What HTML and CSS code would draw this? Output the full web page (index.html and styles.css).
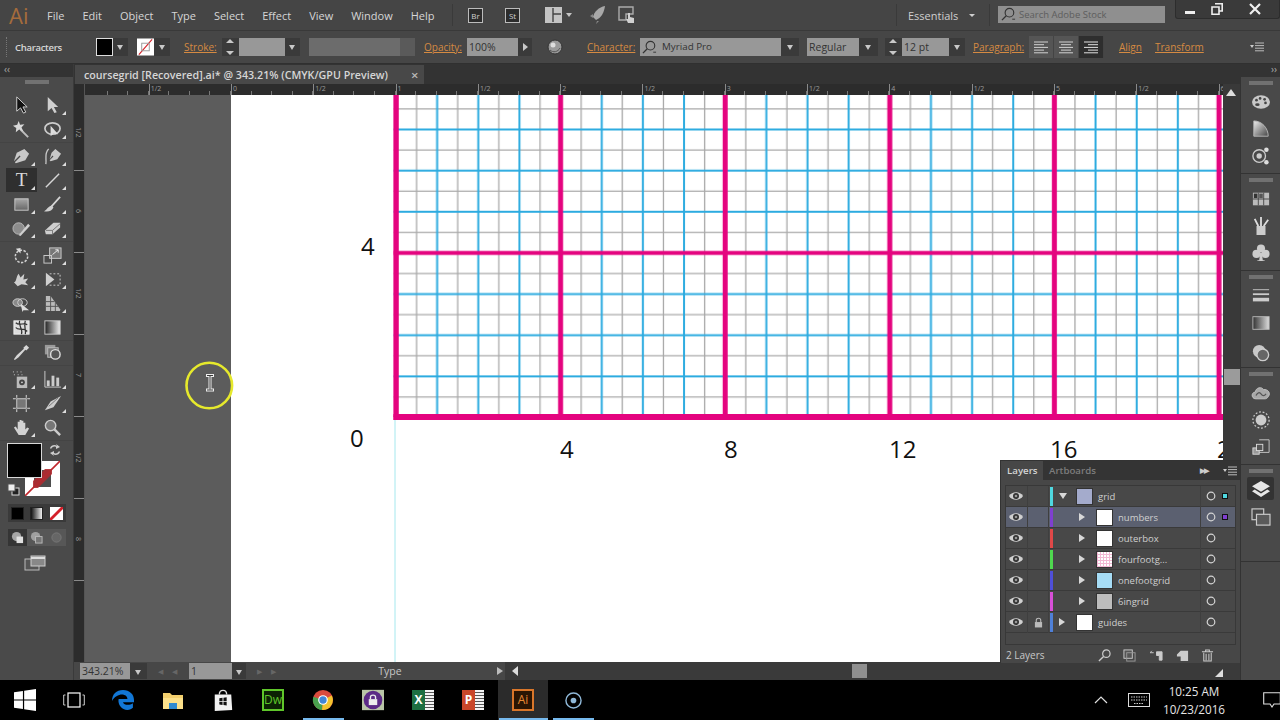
FILE: index.html
```html
<!DOCTYPE html>
<html lang="en">
<head>
    <meta charset="UTF-8">
    <title>coursegrid [Recovered].ai - Adobe Illustrator</title>
    <link rel="stylesheet" href="styles.css">
</head>
<body>
<!-- shared icons -->
<svg class="sprite" width="0" height="0">
    <defs>
        <symbol id="eye" viewBox="0 0 14 10"><path d="M0 5C3 0 11 0 14 5C11 10 3 10 0 5Z" fill="#d0d0d0"/><circle cx="7" cy="5" r="3" fill="#333"/><circle cx="7" cy="5" r="1.3" fill="#999"/></symbol>
        <symbol id="target" viewBox="0 0 10 10"><circle cx="5" cy="5" r="3.8" fill="none" stroke="#d4d4d4" stroke-width="1.2"/></symbol>
        <symbol id="grip" viewBox="0 0 24 4"><path d="M1 0V4M3 0V4M5 0V4M7 0V4M9 0V4M11 0V4M13 0V4M15 0V4M17 0V4M19 0V4M21 0V4M23 0V4" stroke="#9a9a9a" stroke-width="1"/></symbol>
        <symbol id="panelmenu" viewBox="0 0 14 10"><path d="M5 1H14M5 3.6H14M5 6.2H14M5 8.8H14" stroke="#bbb" stroke-width="1"/><path d="M0 3H4L2 6Z" fill="#ccc"/></symbol>
        <linearGradient id="gradgray" x1="0" y1="0" x2="1" y2="1"><stop offset="0" stop-color="#eee"/><stop offset="1" stop-color="#444"/></linearGradient>
        <pattern id="gridcell" patternUnits="userSpaceOnUse" x="385.71" y="242.71" width="164.6" height="164.6">
            <path d="M30.865 0V164.6M72.015 0V164.6M113.165 0V164.6M154.315 0V164.6M0 30.865H164.6M0 72.015H164.6M0 113.165H164.6M0 154.315H164.6" stroke="#a9a9a9" stroke-width="1.3" fill="none"/>
            <path d="M51.44 0V164.6M92.59 0V164.6M133.74 0V164.6M0 51.44H164.6M0 92.59H164.6M0 133.74H164.6" stroke="#2cabe0" stroke-width="2" fill="none"/>
            <path d="M10.29 0V164.6" stroke="#e4047f" stroke-width="5" fill="none"/>
            <path d="M0 10.29H164.6" stroke="#e4047f" stroke-width="4" fill="none"/>
        </pattern>
    </defs>
</svg>

<div class="app">
    <header class="menubar">
        <span class="ai-logo">Ai</span>
        <nav class="menu">
            <span>File</span><span>Edit</span><span>Object</span><span>Type</span><span>Select</span><span>Effect</span><span>View</span><span>Window</span><span>Help</span>
        </nav>
        <span class="vsep"></span>
        <span class="boxbtn boxbtn-br">Br</span>
        <span class="boxbtn boxbtn-st">St</span>
        <svg class="menu-ic menu-layout" viewBox="0 0 28 16"><path d="M0 0H17V16H0Z" fill="#c4c4c4"/><path d="M8 1V15M8 7H16" stroke="#444" stroke-width="1.4"/><path d="M21 6H27L24 10Z" fill="#c4c4c4"/></svg>
        <svg class="menu-ic menu-rocket" viewBox="0 0 16 18"><path d="M15 0C9 1 4 6 3 11L6 14C11 12 14 7 15 0Z" fill="#a8a8a8"/><path d="M3 8L0 10L3 12ZM7 15L6 18L9 15Z" fill="#888"/></svg>
        <svg class="menu-ic menu-hand" viewBox="0 0 18 18"><path d="M1 1H15V8H8V14H1Z" fill="none" stroke="#aaa" stroke-width="1.4"/><path d="M10 7H12V11L16 12V17H10L8 13H10Z" fill="#d0d0d0"/></svg>
        <span class="vsep vsep-essentials"></span>
        <span class="workspace-name">Essentials</span>
        <span class="caret-small"></span>
        <span class="vsep vsep-search"></span>
        <div class="stock-search">
            <svg class="search-ic" viewBox="0 0 16 16"><circle cx="9" cy="6" r="4.6" fill="none" stroke="#333" stroke-width="1.2"/><path d="M5.6 9.4L1 14" stroke="#333" stroke-width="1.4"/><path d="M12 13H15" stroke="#333"/></svg>
            <span>Search Adobe Stock</span>
        </div>
        <div class="winctl">
            <span class="win-min"></span>
            <svg class="win-restore" viewBox="0 0 12 12"><path d="M4 0.8H11.2V8H8.5M1 4H8V11.2H1Z" fill="none" stroke="#eee" stroke-width="1.6"/></svg>
            <svg class="win-close" viewBox="0 0 12 12"><path d="M1 1L11 11M11 1L1 11" stroke="#eee" stroke-width="2.2"/></svg>
        </div>
    </header>

    <section class="optionsbar">
        <span class="opt-grip"></span>
        <span class="opt-name">Characters</span>
        <span class="swatch swatch-fill ml-34"></span><span class="drop w15"></span>
        <svg class="swatch-stroke ml-9" viewBox="0 0 18 18"><rect width="18" height="18" fill="#fff"/><path d="M2 17L16 1" stroke="#d42027" stroke-width="1.2"/><rect x="5" y="5" width="8" height="8" fill="none" stroke="#999"/></svg><span class="drop w16"></span>
        <span class="link ml-14 w30">Stroke:</span>
        <span class="stepper ml-8"></span><span class="field w46"></span><span class="drop w15"></span>
        <span class="field field-dim ml-9 w106"><i class="drop-mini"></i></span>
        <span class="link ml-9 w36">Opacity:</span>
        <span class="field ml-7 w51">100%</span><span class="drop drop-right w14"></span>
        <svg class="globe ml-15" viewBox="0 0 16 16"><circle cx="8" cy="8" r="7" fill="#9a9a9a" stroke="#333"/><circle cx="6" cy="6" r="2.5" fill="#ddd"/><path d="M3 11C6 14 11 13 13 9" stroke="#555" fill="none"/></svg>
        <span class="link ml-24 w45">Character:</span>
        <span class="field field-font ml-8"><svg class="search-ic" viewBox="0 0 16 16"><circle cx="9" cy="6" r="4.6" fill="none" stroke="#333" stroke-width="1.2"/><path d="M5.6 9.4L1 14" stroke="#333" stroke-width="1.4"/><path d="M12 13H15" stroke="#333"/></svg>Myriad Pro</span><span class="drop w18"></span>
        <span class="field ml-8 w52">Regular</span><span class="drop w19"></span>
        <span class="stepper ml-7"></span><span class="field w47">12 pt</span><span class="drop w16"></span>
        <span class="link ml-8 w49">Paragraph:</span>
        <div class="aligns ml-7">
            <span class="align-btn"><svg viewBox="0 0 14 13"><path d="M0 1H14M0 3.7H10M0 6.4H14M0 9.1H10M0 11.8H14" stroke="#d2d2d2"/></svg></span>
            <span class="align-btn"><svg viewBox="0 0 14 13"><path d="M0 1H14M2 3.7H12M0 6.4H14M2 9.1H12M0 11.8H14" stroke="#d2d2d2"/></svg></span>
            <span class="align-btn align-on"><svg viewBox="0 0 14 13"><path d="M0 1H14M4 3.7H14M0 6.4H14M4 9.1H14M0 11.8H14" stroke="#e2e2e2"/></svg></span>
        </div>
        <span class="link ml-15 w22">Align</span>
        <span class="link ml-14 w45">Transform</span>
        <svg class="opt-menu" viewBox="0 0 14 10"><use href="#panelmenu"/></svg>
    </section>

    <div class="workspace">
        <aside class="toolpanel">
            <div class="collapse-tab">&#8249;&#8249;</div>
            <svg class="panel-grip" viewBox="0 0 24 4"><use href="#grip"/></svg>
            <div class="toolgroup">
                <span class="tool"><svg viewBox="0 0 20 20"><path d="M5 1V16L9 12.500L12 18L14.500 17L11.500 11.500H16Z" fill="#111" stroke="#d2d2d2"/></svg></span>
                <span class="tool more"><svg viewBox="0 0 20 20"><path d="M5 1V16L9 12.500L12 18L14.500 17L11.500 11.500H16Z" fill="#cfcfcf"/></svg></span>
                <span class="tool"><svg viewBox="0 0 20 20"><path d="M9 10L17 18" stroke="#bdbdbd" stroke-width="2"/><path d="M7 1L8.500 5L13 4.500L10 8L12 12L7.500 10L4 13L4.500 8.500L1 6L5.500 5Z" fill="#d8d8d8"/></svg></span>
                <span class="tool more"><svg viewBox="0 0 20 20"><ellipse cx="10" cy="9" rx="8" ry="6" fill="none" stroke="#ccc" stroke-width="1.800"/><path d="M8 6V17L11 14.500L16 15Z" fill="#ddd"/></svg></span>
            </div>
            <div class="toolgroup">
                <span class="tool more"><svg viewBox="0 0 20 20"><path d="M13 2L18 7L14 14L4 17L3 16L9 10L8 9L2 15L5 6Z" fill="#c8c8c8"/></svg></span>
                <span class="tool more"><svg viewBox="0 0 20 20"><path d="M13 2L19 7L15 13L8 15L7 14L11 10L10 9L7 13L9 6Z" fill="#c8c8c8"/><path d="M6 2C1 7 4 11 3 18" stroke="#c8c8c8" fill="none" stroke-width="1.400"/></svg></span>
                <span class="tool tool-on more"><span class="tool-t">T</span></span>
                <span class="tool more"><svg viewBox="0 0 20 20"><path d="M3 17L17 3" stroke="#d6d6d6" stroke-width="1.500"/></svg></span>
                <span class="tool more"><svg viewBox="0 0 20 20"><defs><linearGradient id="rectfill" x1="0" y1="0" x2="0" y2="1"><stop offset="0" stop-color="#a8a8a8"/><stop offset="1" stop-color="#666"/></linearGradient></defs><rect x="3" y="4" width="14" height="12" fill="url(#rectfill)" stroke="#c8c8c8"/></svg></span>
                <span class="tool more"><svg viewBox="0 0 20 20"><path d="M18 2L9 12" stroke="#d6d6d6" stroke-width="1.800"/><path d="M9 11L11 13C10 17 5 18 1 17C4 16 5 12 9 11Z" fill="#d0d0d0"/></svg></span>
                <span class="tool more"><svg viewBox="0 0 20 20"><circle cx="7" cy="10" r="6" fill="#8c8c8c" stroke="#bbb"/><path d="M7 17L17 5L19 7L9 18Z" fill="#cfcfcf"/></svg></span>
                <span class="tool more"><svg viewBox="0 0 20 20"><path d="M2 12L11 4H18L18 9L10 16H3Z" fill="#cfcfcf"/><path d="M3 12H10L18 5M10 12V16" stroke="#777" fill="none"/></svg></span>
            </div>
            <div class="toolgroup">
                <span class="tool more"><svg viewBox="0 0 20 20"><circle cx="10" cy="11" r="6.500" fill="none" stroke="#d0d0d0" stroke-width="1.600" stroke-dasharray="2.500 1.500"/><path d="M4 3L9 2V8Z" fill="#ddd"/></svg></span>
                <span class="tool more"><svg viewBox="0 0 20 20"><rect x="7" y="2" width="12" height="11" fill="#777" stroke="#ccc"/><rect x="1" y="10" width="8" height="8" fill="none" stroke="#ccc"/><path d="M10 9L16 4M13 4H16V7" stroke="#eee" fill="none"/></svg></span>
                <span class="tool more"><svg viewBox="0 0 20 20"><path d="M2 13C5 13 4 7 7 4L9 8L13 4L12 10L17 9L14 13L17 16L10 15L6 17Z" fill="#cfcfcf"/></svg></span>
                <span class="tool more"><svg viewBox="0 0 20 20"><path d="M3 3V17L12 10Z" fill="#cfcfcf"/><path d="M7 4H18V16H7" stroke="#ccc" stroke-dasharray="2 2" fill="none"/></svg></span>
                <span class="tool more"><svg viewBox="0 0 20 20"><ellipse cx="6" cy="9" rx="5" ry="4" fill="#8a8a8a" stroke="#ccc"/><ellipse cx="11" cy="9" rx="5" ry="4" fill="none" stroke="#ccc"/><path d="M9 10L18 17L12 17L11 19Z" fill="#ddd"/></svg></span>
                <span class="tool more"><svg viewBox="0 0 20 20"><path d="M3 2H8L18 16V18H3Z" fill="#bbb"/><path d="M8 2V18M13 9V18M3 8H12M3 13H16" stroke="#555"/></svg></span>
                <span class="tool"><svg viewBox="0 0 20 20"><rect x="2" y="3" width="16" height="14" fill="#ddd" stroke="#eee"/><path d="M4 5C8 9 12 4 16 7M4 10C7 14 12 9 16 14M8 3C6 8 12 11 10 17M14 3C12 8 15 12 14 17" stroke="#333" stroke-width="1.300" fill="none"/></svg></span>
                <span class="tool"><svg viewBox="0 0 20 20"><defs><linearGradient id="toolgrad" x1="0" y1="0" x2="1" y2="0"><stop offset="0" stop-color="#222"/><stop offset="1" stop-color="#eee"/></linearGradient></defs><rect x="2" y="3" width="16" height="14" fill="url(#toolgrad)" stroke="#ccc"/></svg></span>
            </div>
            <div class="toolgroup toolgroup-tight">
                <span class="tool"><svg viewBox="0 0 20 20"><path d="M15 2L18 5L15 8L14 7L7 15L3 18L2 17L5 13L12.500 6L12 5Z" fill="#d6d6d6"/></svg></span>
                <span class="tool"><svg viewBox="0 0 20 20"><rect x="2" y="2" width="11" height="10" fill="#999"/><rect x="5" y="5" width="11" height="10" fill="#777" stroke="#bbb"/><circle cx="13" cy="12" r="5" fill="#555" stroke="#ddd" stroke-width="1.500"/></svg></span>
            </div>
            <div class="toolgroup">
                <span class="tool more"><svg viewBox="0 0 20 20"><path d="M1 2H3M5 2H7M9 2H11M2 5H4M6 5H8M10 5H12" stroke="#ccc" stroke-dasharray="1 1"/><rect x="5" y="7" width="11" height="12" fill="#bbb"/><circle cx="10.500" cy="13" r="3" fill="#444"/><circle cx="10.500" cy="13" r="1" fill="#ccc"/></svg></span>
                <span class="tool more"><svg viewBox="0 0 20 20"><path d="M2 1V18H19" stroke="#ccc" fill="none"/><rect x="4" y="11" width="3" height="6" fill="#ccc"/><rect x="9" y="6" width="3" height="11" fill="#ccc"/><rect x="14" y="8" width="3" height="9" fill="#ccc"/></svg></span>
                <span class="tool"><svg viewBox="0 0 20 20"><rect x="5" y="5" width="10" height="10" fill="#777" stroke="#ccc"/><path d="M5 1V4M15 1V4M5 16V19M15 16V19M1 5H4M1 15H4M16 5H19M16 15H19" stroke="#ddd"/></svg></span>
                <span class="tool more"><svg viewBox="0 0 20 20"><path d="M19 2L8 8L2 17L11 14Z" fill="#cdcdcd"/><path d="M16 4L6 13" stroke="#777"/></svg></span>
                <span class="tool more"><svg viewBox="0 0 20 20"><path d="M2 10L4 9L6 12V4H8V9V2H10V9V3H12V9V5H14V12L16 10L18 11L14 18H7Z" fill="#d2d2d2"/></svg></span>
                <span class="tool"><svg viewBox="0 0 20 20"><circle cx="8" cy="8" r="5.500" fill="#777" stroke="#ccc" stroke-width="1.500"/><path d="M12 12L18 18" stroke="#ccc" stroke-width="2.500"/></svg></span>
            </div>

            <div class="colorbox">
                <svg class="stroke-box" viewBox="0 0 35 35"><rect width="35" height="35" fill="#fff"/><rect x="9" y="9" width="17" height="17" fill="#4d4d4d"/><path d="M0 35L35 0" stroke="#c1272d" stroke-width="1.600"/><path d="M8 20L20 8L27 8L27 13L13 27L8 27Z" fill="#b02a30" opacity=".9"/></svg>
                <span class="fill-box"></span>
                <svg class="swap-ic" viewBox="0 0 14 14"><path d="M2 5C3 2 7 1 9 3L8 1L12 4L8 6V4C6 3 4 4 3 6ZM12 9C11 12 7 13 5 11L6 13L2 10L6 8V10C8 11 10 10 11 8Z" fill="#ccc"/></svg>
                <svg class="default-ic" viewBox="0 0 13 13"><rect x="5" y="5" width="7" height="7" fill="#222" stroke="#ddd"/><rect x="1" y="1" width="7" height="7" fill="#eee" stroke="#555"/></svg>
            </div>
            <div class="modes modes-color">
                <span class="mode"><i class="mode-black"></i></span>
                <span class="mode"><i class="mode-grad"></i></span>
                <span class="mode"><svg viewBox="0 0 12 12"><rect width="12" height="12" fill="#fff"/><path d="M0 12L12 0" stroke="#d4202a" stroke-width="2.600"/></svg></span>
            </div>
            <div class="modes modes-draw">
                <span class="mode mode-on"><svg viewBox="0 0 14 14"><circle cx="6" cy="6" r="5" fill="#a5a5a5"/><rect x="6" y="6" width="7" height="7" fill="#e0e0e0"/></svg></span>
                <span class="mode"><svg viewBox="0 0 14 14"><circle cx="6" cy="6" r="5" fill="#a0a0a0"/><rect x="6" y="6" width="7" height="7" fill="#777" stroke="#bbb"/></svg></span>
                <span class="mode"><svg viewBox="0 0 14 14"><circle cx="7" cy="7" r="5" fill="#666" stroke="#777"/></svg></span>
            </div>
            <svg class="screen-mode" viewBox="0 0 22 16"><rect x="1" y="4" width="14" height="11" fill="#555" stroke="#bbb"/><rect x="7" y="1" width="14" height="10" fill="#888" stroke="#ccc"/><path d="M7 3H21" stroke="#ddd" stroke-width="2"/></svg>
        </aside>

        <main class="docarea">
            <div class="tabstrip">
                <div class="doctab">
                    <span class="doctab-title">coursegrid [Recovered].ai* @ 343.21% (CMYK/GPU Preview)</span>
                    <span class="doctab-close">&#215;</span>
                </div>
            </div>
            <div class="ruler-row">
                <span class="ruler-corner"></span>
                <div class="ruler-top">
                    <span>1/2</span><span>0</span><span>1/2</span><span>1</span><span>1/2</span><span>2</span><span>1/2</span><span>3</span><span>1/2</span><span>4</span><span>1/2</span><span>5</span><span>1/2</span><span>6</span>
                </div>
                <span class="scroll-cap"><i class="arrow-up"></i></span>
            </div>
            <div class="canvas-row">
                <div class="ruler-left">
                    <span>1/2</span><span>6</span><span>1/2</span><span>7</span><span>1/2</span><span>8</span>
                </div>
                <div class="canvas">
                    <svg class="art" viewBox="85 95 1138 567">
                        <rect x="231" y="95" width="992" height="567" fill="#fff"/>
                        <rect x="393.500" y="95" width="829.500" height="322" fill="url(#gridcell)"/>
                        <path d="M396 95V420" stroke="#e4047f" stroke-width="5"/>
                        <path d="M393.500 417H1223" stroke="#e4047f" stroke-width="6"/>
                        <path d="M395 420V662" stroke="#a5e8ee" stroke-width="1"/>
                        <circle cx="209.300" cy="385.500" r="22.800" fill="none" stroke="#e6e92c" stroke-width="2.600"/>
                        <path d="M206 375.500H214M210 375.500V390M206 390H214" fill="none" stroke="#eee" stroke-width="3"/>
                        <path d="M207 375.500H213M210 376V389.500M207 390H213" fill="none" stroke="#3a3a3a" stroke-width="1"/>
                    </svg>
                    <span class="num num-y4">4</span>
                    <span class="num num-y0">0</span>
                    <span class="num num-x4">4</span>
                    <span class="num num-x8">8</span>
                    <span class="num num-x12">12</span>
                    <span class="num num-x16">16</span>
                    <span class="num num-x20">2</span>
                </div>
                <div class="vscroll"><span class="vthumb"></span></div>
            </div>
            <footer class="statusrow">
                <div class="status-left">
                    <span class="field status-zoom">343.21%</span><span class="drop status-drop"></span>
                    <span class="nav nav-first">&#9664;</span><span class="nav">&#9664;</span>
                    <span class="field status-page">1</span><span class="drop status-drop-page"></span>
                    <span class="nav nav-next">&#9654;</span><span class="nav">&#9654;</span>
                    <span class="status-tool">Type</span>
                    <i class="arrow-right"></i>
                </div>
                <div class="hscroll">
                    <i class="arrow-left"></i>
                    <span class="hthumb"></span>
                    <i class="corner-mark"></i>
                </div>
            </footer>

            <section class="layers">
                <div class="layers-tabs">
                    <span class="ltab ltab-on">Layers</span>
                    <span class="ltab">Artboards</span>
                    <span class="ltab-more">&#9654;&#9654;</span>
                    <svg class="ltab-menu" viewBox="0 0 14 10"><use href="#panelmenu"/></svg>
                </div>
                <div class="layer-list">
                    <div class="layer">
                        <svg class="l-eye"><use href="#eye"/></svg><span class="l-lock"></span><span class="l-bar bar-cyan"></span>
                        <div class="l-main"><i class="tri-down"></i><span class="thumb thumb-grid"></span><span class="l-name">grid</span></div>
                        <div class="l-target"><svg><use href="#target"/></svg><i class="sel sel-cyan"></i></div>
                    </div>
                    <div class="layer layer-on">
                        <svg class="l-eye"><use href="#eye"/></svg><span class="l-lock"></span><span class="l-bar bar-purple"></span>
                        <div class="l-main l-child"><i class="tri-right"></i><span class="thumb"></span><span class="l-name">numbers</span></div>
                        <div class="l-target"><svg><use href="#target"/></svg><i class="sel sel-purple"></i></div>
                    </div>
                    <div class="layer">
                        <svg class="l-eye"><use href="#eye"/></svg><span class="l-lock"></span><span class="l-bar bar-red"></span>
                        <div class="l-main l-child"><i class="tri-right"></i><span class="thumb"></span><span class="l-name">outerbox</span></div>
                        <div class="l-target"><svg><use href="#target"/></svg></div>
                    </div>
                    <div class="layer">
                        <svg class="l-eye"><use href="#eye"/></svg><span class="l-lock"></span><span class="l-bar bar-green"></span>
                        <div class="l-main l-child"><i class="tri-right"></i><span class="thumb thumb-four"></span><span class="l-name">fourfootg...</span></div>
                        <div class="l-target"><svg><use href="#target"/></svg></div>
                    </div>
                    <div class="layer">
                        <svg class="l-eye"><use href="#eye"/></svg><span class="l-lock"></span><span class="l-bar bar-blue"></span>
                        <div class="l-main l-child"><i class="tri-right"></i><span class="thumb thumb-one"></span><span class="l-name">onefootgrid</span></div>
                        <div class="l-target"><svg><use href="#target"/></svg></div>
                    </div>
                    <div class="layer">
                        <svg class="l-eye"><use href="#eye"/></svg><span class="l-lock"></span><span class="l-bar bar-pink"></span>
                        <div class="l-main l-child"><i class="tri-right"></i><span class="thumb thumb-six"></span><span class="l-name">6ingrid</span></div>
                        <div class="l-target"><svg><use href="#target"/></svg></div>
                    </div>
                    <div class="layer">
                        <svg class="l-eye"><use href="#eye"/></svg>
                        <span class="l-lock"><svg viewBox="0 0 10 12"><path d="M2.500 6V3.500C2.500 0.500 7.500 0.500 7.500 3.500V6" fill="none" stroke="#bbb" stroke-width="1.200"/><rect x="1" y="5.500" width="8" height="6" fill="#bbb"/></svg></span>
                        <span class="l-bar bar-royal"></span>
                        <div class="l-main"><i class="tri-right"></i><span class="thumb"></span><span class="l-name">guides</span></div>
                        <div class="l-target"><svg><use href="#target"/></svg></div>
                    </div>
                </div>
                <div class="layers-foot">
                    <span class="foot-count">2 Layers</span>
                    <svg class="foot-ic foot-find" viewBox="0 0 14 14"><circle cx="9" cy="5" r="4" fill="none" stroke="#ccc" stroke-width="1.300"/><path d="M6 8L1 13" stroke="#ccc" stroke-width="1.500"/></svg>
                    <svg class="foot-ic foot-clip" viewBox="0 0 14 14"><rect x="1" y="1" width="9" height="9" fill="#555" stroke="#ccc"/><rect x="4" y="4" width="9" height="9" fill="none" stroke="#999"/></svg>
                    <svg class="foot-ic foot-sub" viewBox="0 0 14 14"><path d="M0 4H4M0 4L2 2M7 3H13V12H10V7H7Z" stroke="#ccc" fill="#ccc"/></svg>
                    <svg class="foot-ic foot-new" viewBox="0 0 14 14"><path d="M5 2H13V13H5V8H1V6Z" fill="#ccc"/></svg>
                    <svg class="foot-ic foot-trash" viewBox="0 0 14 14"><path d="M1 3H13M5 3V1H9V3M3 4V13H11V4M5.500 5V12M8.500 5V12" stroke="#ccc" fill="none" stroke-width="1.100"/></svg>
                </div>
            </section>
        </main>

        <aside class="dock">
            <div class="collapse-tab collapse-right">&#8250;&#8250;</div>
            <div class="dockgroup">
                <svg class="dock-grip" viewBox="0 0 24 4"><use href="#grip"/></svg>
                <svg class="dock-ic" viewBox="0 0 22 20"><ellipse cx="11" cy="10" rx="10" ry="7.500" fill="#c8c8c8"/><circle cx="6" cy="8" r="1.500" fill="#444"/><circle cx="10" cy="6" r="1.500" fill="#444"/><circle cx="15" cy="7" r="1.500" fill="#444"/><circle cx="16" cy="11" r="1.500" fill="#444"/><ellipse cx="7" cy="13" rx="2.500" ry="1.500" fill="#444"/></svg>
                <svg class="dock-ic" viewBox="0 0 22 20"><path d="M3 1C12 1 19 9 19 18H3Z" fill="url(#gradgray)" stroke="#bbb"/></svg>
                <svg class="dock-ic" viewBox="0 0 22 20"><circle cx="9" cy="10" r="7" fill="none" stroke="#ccc" stroke-width="1.500"/><circle cx="9" cy="10" r="3" fill="#ccc"/><circle cx="17" cy="3" r="2.500" fill="#ddd"/><circle cx="17" cy="17" r="2.500" fill="#ddd"/></svg>
            </div>
            <div class="dockgroup">
                <svg class="dock-grip" viewBox="0 0 24 4"><use href="#grip"/></svg>
                <svg class="dock-ic" viewBox="0 0 22 20"><rect x="2" y="3" width="18" height="14" fill="#bbb"/><path d="M2 10H20M8 3V17M14 3V17" stroke="#444"/><rect x="3" y="4" width="4" height="5" fill="#333"/><rect x="9" y="4" width="4" height="5" fill="#555"/></svg>
                <svg class="dock-ic" viewBox="0 0 22 20"><path d="M6 10H16V20H6Z" fill="#ccc"/><path d="M8 10L4 2M11 10V0M14 10L19 3" stroke="#ddd" stroke-width="2"/></svg>
                <svg class="dock-ic" viewBox="0 0 22 20"><circle cx="11" cy="5" r="4.500" fill="#ccc"/><circle cx="6" cy="11" r="4.500" fill="#ccc"/><circle cx="16" cy="11" r="4.500" fill="#ccc"/><path d="M10 10H12L13 18H15V19H7V18H9Z" fill="#ccc"/></svg>
            </div>
            <div class="dockgroup">
                <svg class="dock-grip" viewBox="0 0 24 4"><use href="#grip"/></svg>
                <svg class="dock-ic" viewBox="0 0 22 20"><path d="M2 3H20" stroke="#ccc"/><path d="M2 8H20" stroke="#ccc" stroke-width="2"/><path d="M2 14H20" stroke="#ccc" stroke-width="4"/></svg>
                <svg class="dock-ic" viewBox="0 0 22 20"><defs><linearGradient id="dockgrad" x1="0" y1="0" x2="1" y2="0"><stop offset="0" stop-color="#333"/><stop offset="1" stop-color="#ddd"/></linearGradient></defs><rect x="2" y="3" width="18" height="14" fill="url(#dockgrad)" stroke="#bbb"/></svg>
                <svg class="dock-ic dock-ic-low" viewBox="0 0 22 20"><circle cx="9" cy="8" r="7" fill="#c8c8c8"/><circle cx="13" cy="12" r="6.500" fill="#666" stroke="#ccc" stroke-width="1.500"/></svg>
            </div>
            <div class="dockgroup">
                <svg class="dock-grip" viewBox="0 0 24 4"><use href="#grip"/></svg>
                <svg class="dock-ic" viewBox="0 0 24 20"><path d="M6 17C0 17 0 9 5 9C6 3 13 2 15 6C20 5 24 10 21 14C20 16 18 17 17 17Z" fill="#a8a8a8" stroke="#ccc"/><path d="M6 13C8 9 10 9 12 11C14 14 16 14 18 11" stroke="#555" stroke-width="1.500" fill="none"/></svg>
                <svg class="dock-ic" viewBox="0 0 22 20"><circle cx="11" cy="10" r="6" fill="#ccc"/><circle cx="11" cy="10" r="9" fill="none" stroke="#ccc" stroke-width="1.400" stroke-dasharray="2 2"/></svg>
                <svg class="dock-ic" viewBox="0 0 22 20"><path d="M9 2H20V16H9" fill="none" stroke="#ccc"/><rect x="2" y="11" width="7" height="7" fill="#999" stroke="#ddd"/><rect x="6" y="7" width="7" height="7" fill="#555" stroke="#ddd"/></svg>
            </div>
            <div class="dockgroup">
                <svg class="dock-grip" viewBox="0 0 24 4"><use href="#grip"/></svg>
                <span class="dock-on"><svg class="dock-ic" viewBox="0 0 22 20"><path d="M11 1L21 7L11 13L1 7Z" fill="#e6e6e6"/><path d="M4 10.500L11 15L18 10.500L21 12.500L11 19L1 12.500Z" fill="#e6e6e6"/></svg></span>
                <svg class="dock-ic" viewBox="0 0 22 20"><rect x="1" y="1" width="13" height="12" fill="none" stroke="#ccc" stroke-width="1.300"/><rect x="6" y="7" width="15" height="12" fill="#5a5a5a" stroke="#ccc" stroke-width="1.300"/></svg>
            </div>
        </aside>
    </div>

    <footer class="taskbar">
        <span class="task task-narrow"><svg viewBox="0 0 18 18"><path d="M0 2.600L7.300 1.600V8.500H0ZM8.300 1.400L18 0V8.500H8.300ZM0 9.500H7.300V16.400L0 15.400ZM8.300 9.500H18V18L8.300 16.600Z" fill="#fff"/></svg></span>
        <span class="task task-narrow"><svg viewBox="0 0 22 16"><rect x="5" y="1" width="12" height="14" fill="none" stroke="#fff" stroke-width="1.200"/><path d="M2.500 3H0.700V13H2.500M19.500 3H21.300V13H19.500" fill="none" stroke="#ccc"/></svg></span>
        <span class="task"><svg viewBox="0 0 20 20"><path d="M10 1C4 1 0 5 0 11C2 7 6 5 9 5C12 5 14 7 14 9H6C5 14 9 19 14 19C16 19 18 18 19 17V13C16 15 11 15 10 12H20V10C20 5 16 1 10 1Z" fill="#1277d6"/></svg></span>
        <span class="task"><svg viewBox="0 0 22 20"><path d="M1 3H8L10 5H21V8H1Z" fill="#f3cf6d"/><path d="M1 8H21V19H1Z" fill="#fbe08a"/><rect x="7" y="13" width="8" height="6" fill="#2f8ad0"/></svg></span>
        <span class="task"><svg viewBox="0 0 20 24"><path d="M1 6H19L20 23L1 24Z" fill="#f2f2f2"/><path d="M6 6C6 0 14 0 14 6" fill="none" stroke="#ddd" stroke-width="1.500"/><path d="M6 10L9.500 9.500V13H6ZM10.500 9.500L14 9V13H10.500ZM6 14H9.500V17.500L6 17ZM10.500 14H14V18L10.500 17.500Z" fill="#111"/></svg></span>
        <span class="task"><span class="app-box app-dw">Dw</span></span>
        <span class="task task-run"><svg viewBox="0 0 24 24"><circle cx="12" cy="12" r="11" fill="#d94b3d"/><path d="M12 12L1.500 8.500A11 11 0 0 0 11 23Z" fill="#49a04d"/><path d="M12 12L11 23A11 11 0 0 0 21.500 7Z" fill="#f3c32e"/><circle cx="12" cy="12" r="5.300" fill="#fff"/><circle cx="12" cy="12" r="4" fill="#4285d6"/></svg></span>
        <span class="task"><svg viewBox="0 0 26 24"><rect width="26" height="24" fill="#d9e8c4" opacity=".85"/><circle cx="13" cy="12" r="11" fill="#5b2a86"/><rect x="8" y="11" width="10" height="7" fill="#eee"/><path d="M10 11V8.500C10 5.500 16 5.500 16 8.500V11" fill="none" stroke="#eee" stroke-width="1.600"/></svg></span>
        <span class="task"><span class="app-office app-xl"><b>X</b><i></i></span></span>
        <span class="task"><span class="app-office app-ppt"><b>P</b><i></i></span></span>
        <span class="task task-active"><span class="app-box app-ai">Ai</span></span>
        <span class="task task-run task-small"><svg viewBox="0 0 18 18"><circle cx="9" cy="9" r="8" fill="none" stroke="#8fb8d8" stroke-width="1.500"/><circle cx="9" cy="9" r="3" fill="#8fb8d8"/></svg></span>
        <div class="tray">
            <svg class="tray-chevron" viewBox="0 0 14 8"><path d="M1 7L7 1L13 7" fill="none" stroke="#e0e0e0" stroke-width="1.200"/></svg>
            <svg class="tray-keys" viewBox="0 0 22 14"><rect x="0.500" y="0.500" width="21" height="13" fill="none" stroke="#ddd"/><path d="M3 4H19M3 7H19M6 10.500H16" stroke="#ccc" stroke-dasharray="1.500 1"/></svg>
            <div class="clock"><span>10:25 AM</span><span>10/23/2016</span></div>
            <svg class="tray-note" viewBox="0 0 18 16"><path d="M0.700 0.700H17.300V12H11L9 15L7 12H0.700Z" fill="none" stroke="#e0e0e0" stroke-width="1.100"/></svg>
        </div>
    </footer>
</div>
</body>
</html>
```

FILE: styles.css
```css
* {
    box-sizing: border-box;
}

body {
    margin: 0;
    background: #000;
    font-family: "Open Sans", "Liberation Sans", sans-serif;
    overflow: hidden;
}

.sprite {
    position: absolute;
}

.app {
    width: 1280px;
    height: 720px;
    display: flex;
    flex-direction: column;
}

/* menu bar */
.menubar {
    height: 31px;
    flex: none;
    display: flex;
    align-items: center;
    background: #454545;
    border-bottom: 1px solid #393939;
    position: relative;
}

.ai-logo {
    width: 47px;
    padding-left: 9px;
    font-size: 22px;
    line-height: 30px;
    color: #a56c3c;
}

.menu {
    display: flex;
    gap: 18px;
    font-size: 11px;
    color: #d6d6d6;
    width: 392px;
}

.vsep {
    width: 1px;
    height: 22px;
    background: #3a3a3a;
    margin-left: 13px;
}

.boxbtn {
    width: 15px;
    height: 15px;
    border: 1px solid #bcbcbc;
    background: #2c2c2c;
    color: #d0d0d0;
    font-size: 8px;
    line-height: 13px;
    text-align: center;
}

.boxbtn-br {
    margin-left: 15px;
}

.boxbtn-st {
    margin-left: 22px;
}

.menu-ic {
    height: 16px;
}

.menu-layout {
    width: 28px;
    margin-left: 25px;
}

.menu-rocket {
    width: 16px;
    height: 18px;
    margin-left: 17px;
}

.menu-hand {
    width: 18px;
    height: 18px;
    margin-left: 12px;
}

.vsep-essentials {
    margin-left: 260px;
}

.workspace-name {
    margin-left: 11px;
    width: 58px;
    font-size: 11px;
    color: #cfcfcf;
}

.caret-small {
    width: 0;
    height: 0;
    margin-left: 3px;
    border: 3px solid transparent;
    border-top: 3px solid #cfcfcf;
    border-bottom: 0;
}

.vsep-search {
    margin-left: 14px;
}

.stock-search {
    width: 167px;
    height: 17px;
    margin-left: 8px;
    margin-bottom: 2px;
    background: #8f8f8f;
    display: flex;
    align-items: center;
    gap: 3px;
    padding-left: 3px;
    font-size: 9.5px;
    color: #5d5d5d;
}

.search-ic {
    width: 15px;
    height: 15px;
    flex: none;
}

.winctl {
    position: absolute;
    top: 0;
    right: 0;
    width: 105px;
    height: 19px;
    background: #3a3a3a;
    border: 1px solid #2d2d2d;
    border-top: 0;
    border-radius: 0 0 3px 3px;
}

.win-min {
    position: absolute;
    left: 9px;
    top: 11px;
    width: 10px;
    height: 3px;
    background: #eee;
}

.win-restore {
    position: absolute;
    left: 35px;
    top: 3px;
    width: 12px;
    height: 12px;
}

.win-close {
    position: absolute;
    left: 73px;
    top: 3px;
    width: 12px;
    height: 12px;
}

/* control panel */
.optionsbar {
    height: 33px;
    flex: none;
    display: flex;
    align-items: center;
    position: relative;
    background: #464646;
    border-bottom: 1px solid #303030;
    font-size: 10.5px;
    color: #333;
}

.opt-grip {
    width: 3px;
    height: 20px;
    margin-left: 6px;
    border-left: 1px dotted #777;
}

.opt-name {
    width: 47px;
    margin-left: 6px;
    white-space: nowrap;
    color: #d6d6d6;
    font-weight: 600;
    font-size: 9.5px;
    letter-spacing: -0.3px;
}

.swatch {
    width: 17px;
    height: 18px;
    border: 1px solid #ddd;
    background: #000;
}

.swatch-stroke {
    width: 17px;
    height: 18px;
}

.drop {
    height: 18px;
    flex: none;
    background: #3a3a3a;
    position: relative;
}

.drop::after {
    content: "";
    position: absolute;
    left: 50%;
    top: 7px;
    margin-left: -3.5px;
    border: 3.5px solid transparent;
    border-top: 5px solid #c8c8c8;
    border-bottom: 0;
}

.drop-right::after {
    top: 5px;
    margin-left: -2px;
    border: 4px solid transparent;
    border-left: 5px solid #c8c8c8;
    border-right: 0;
}

.field {
    height: 18px;
    flex: none;
    background: #989898;
    line-height: 18px;
    padding-left: 2px;
    color: #333;
    white-space: nowrap;
    position: relative;
}

.field-dim {
    background: #6c6c6c;
}

.drop-mini {
    position: absolute;
    right: 0;
    top: 0;
    width: 15px;
    height: 18px;
    background: #5a5a5a;
}

.field-font {
    width: 141px;
    display: flex;
    align-items: center;
    gap: 5px;
    font-size: 9.8px;
}

.stepper {
    width: 17px;
    height: 18px;
    flex: none;
    background: #3a3a3a;
    position: relative;
}

.stepper::before,
.stepper::after {
    content: "";
    position: absolute;
    left: 4px;
    border: 4px solid transparent;
}

.stepper::before {
    top: 1px;
    border-bottom: 4px solid #c8c8c8;
    border-top: 0;
}

.stepper::after {
    bottom: 1px;
    border-top: 4px solid #c8c8c8;
    border-bottom: 0;
}

.link {
    color: #d58a42;
    text-decoration: underline;
    font-size: 10px;
    white-space: nowrap;
    flex: none;
}

.aligns {
    display: flex;
    height: 22px;
    background: #555;
}

.align-btn {
    width: 25px;
    display: flex;
    align-items: center;
    justify-content: center;
    border-right: 1px solid #444;
}

.align-btn svg {
    width: 14px;
    height: 13px;
}

.align-on {
    background: #2e2e2e;
}

.globe {
    width: 16px;
    height: 16px;
    flex: none;
}

.opt-menu {
    width: 14px;
    height: 10px;
    margin-left: 50px;
}

.ml-7 { margin-left: 7px; }
.ml-8 { margin-left: 8px; }
.ml-9 { margin-left: 9px; }
.ml-14 { margin-left: 14px; }
.ml-15 { margin-left: 15px; }
.ml-24 { margin-left: 24px; }
.ml-34 { margin-left: 34px; }
.w14 { width: 14px; }
.w15 { width: 15px; }
.w16 { width: 16px; }
.w18 { width: 18px; }
.w19 { width: 19px; }
.w22 { width: 22px; }
.w30 { width: 30px; }
.w36 { width: 36px; }
.w45 { width: 45px; }
.w46 { width: 46px; }
.w47 { width: 47px; }
.w49 { width: 49px; }
.w51 { width: 51px; }
.w52 { width: 52px; }
.w106 { width: 106px; }

/* main area */
.workspace {
    flex: 1;
    display: flex;
    min-height: 0;
    background: #333;
}

/* tools */
.toolpanel {
    width: 74px;
    flex: none;
    background: #4a4a4a;
    border-right: 1px solid #3a3a3a;
    background-clip: padding-box;
    position: relative;
}

.collapse-tab {
    height: 13px;
    background: #333;
    color: #aaa;
    font-size: 10px;
    line-height: 11px;
    padding-left: 4px;
}

.collapse-right {
    text-align: right;
    padding-right: 3px;
}

.panel-grip {
    display: block;
    width: 24px;
    height: 4px;
    margin: 3px auto 9px;
}

.toolgroup {
    display: grid;
    grid-template-columns: 31px 31px;
    grid-auto-rows: 24px;
    padding: 0 6px 1px;
    margin-bottom: 1px;
    border-bottom: 1px solid #444;
}

.toolgroup-tight {
    margin-top: -2px;
}

.tool {
    display: flex;
    align-items: center;
    justify-content: center;
    position: relative;
}

.tool svg {
    width: 19px;
    height: 19px;
}

.tool.more::after {
    content: "";
    position: absolute;
    right: 2px;
    bottom: 2px;
    border: 2px solid transparent;
    border-right-color: #ddd;
    border-bottom-color: #ddd;
}

.tool-on {
    background: #2f2f2f;
}

.tool-t {
    font-family: "Liberation Serif", serif;
    font-size: 19px;
    line-height: 20px;
    color: #d8d8d8;
}

.colorbox {
    height: 56px;
    margin-top: 2px;
    position: relative;
}

.fill-box {
    position: absolute;
    left: 7px;
    top: 0;
    width: 35px;
    height: 35px;
    background: #000;
    border: 1px solid #d8d8d8;
}

.stroke-box {
    position: absolute;
    left: 25px;
    top: 18px;
    width: 35px;
    height: 35px;
}

.swap-ic {
    position: absolute;
    left: 48px;
    top: 0;
    width: 14px;
    height: 14px;
}

.default-ic {
    position: absolute;
    left: 7px;
    top: 40px;
    width: 13px;
    height: 13px;
}

.modes {
    width: 58px;
    margin-left: 8px;
    display: flex;
    background: #3a3a3a;
}

.modes-color {
    height: 18px;
    margin-top: 5px;
    padding: 2px 0;
}

.modes-draw {
    height: 17px;
    margin-top: 7px;
    background: #575757;
}

.mode {
    flex: 1;
    display: flex;
    align-items: center;
    justify-content: center;
}

.mode svg {
    width: 13px;
    height: 13px;
}

.mode-on {
    background: #353535;
}

.mode-black,
.mode-grad {
    width: 13px;
    height: 13px;
    border: 1px solid #222;
}

.mode-black {
    background: #000;
}

.mode-grad {
    background: linear-gradient(90deg, #111, #eee);
}

.screen-mode {
    display: block;
    width: 22px;
    height: 16px;
    margin: 9px 0 0 24px;
}

/* document area */
.docarea {
    flex: 1;
    min-width: 0;
    display: flex;
    flex-direction: column;
    position: relative;
}

.tabstrip {
    height: 20px;
    flex: none;
    background: #333;
    padding: 1px 0 0 1px;
}

.doctab {
    width: 349px;
    height: 19px;
    background: #484848;
    display: flex;
    align-items: center;
    padding-left: 9px;
    font-size: 10.7px;
    font-weight: 600;
    color: #d6d6d6;
}

.doctab-title {
    width: 327px;
    white-space: nowrap;
}

.doctab-close {
    color: #bbb;
    font-size: 13px;
}

.ruler-row {
    height: 11px;
    flex: none;
    display: flex;
}

.ruler-corner {
    width: 11px;
    background: #2c2c2c;
    border-right: 1px solid #555;
}

.ruler-top {
    flex: 1;
    display: flex;
    padding-left: 63.7px;
    overflow: hidden;
    background: repeating-linear-gradient(90deg, #2c2c2c 0, #2c2c2c 19.575px, #777 19.575px, #777 20.575px) 2px 7px / auto 4px no-repeat #2c2c2c;
}

.ruler-top span {
    width: 82.3px;
    flex: none;
    border-left: 1px solid #8a8a8a;
    padding-left: 1px;
    font-size: 7px;
    line-height: 9px;
    color: #9b9b9b;
}

.scroll-cap {
    width: 17px;
    background: #393939;
    position: relative;
}

.arrow-up {
    position: absolute;
    left: 3px;
    top: 5px;
    border: 5px solid transparent;
    border-bottom: 7px solid #ddd;
    border-top: 0;
}

.canvas-row {
    flex: 1;
    display: flex;
    min-height: 0;
}

.ruler-left {
    width: 11px;
    flex: none;
    background: #2c2c2c;
    border-right: 1px solid #555;
    display: flex;
    flex-direction: column;
    overflow: hidden;
}

.ruler-left span {
    height: 82px;
    flex: none;
    border-bottom: 1px solid #8a8a8a;
    display: flex;
    flex-direction: column;
    justify-content: flex-end;
    align-items: center;
    font-size: 7px;
    line-height: 8px;
    color: #9b9b9b;
    writing-mode: vertical-rl;
}

.ruler-left span:first-child {
    height: 76px;
}

.canvas {
    flex: 1;
    background: #5c5c5c;
    position: relative;
    overflow: hidden;
}

.art {
    position: absolute;
    left: 0;
    top: 0;
    width: 1138px;
    height: 567px;
}

.num {
    position: absolute;
    font-size: 24px;
    line-height: 30px;
    color: #111;
}

.num-y4 { left: 276px; top: 136px; }
.num-y0 { left: 265px; top: 328px; }
.num-x4 { left: 475px; top: 339px; }
.num-x8 { left: 639px; top: 339px; }
.num-x12 { left: 804px; top: 339px; }
.num-x16 { left: 965px; top: 339px; }
.num-x20 { left: 1132px; top: 339px; }

.vscroll {
    width: 17px;
    flex: none;
    background: #393939;
    padding-top: 274px;
    padding-left: 1px;
}

.vthumb {
    display: block;
    height: 16px;
    background: #9b9b9b;
}

.statusrow {
    height: 18px;
    flex: none;
    display: flex;
    font-size: 10.5px;
    color: #ccc;
}

.status-left {
    width: 431px;
    flex: none;
    display: flex;
    align-items: center;
    background: #474747;
    padding-left: 6px;
}

.status-zoom {
    width: 50px;
    height: 16px;
    line-height: 16px;
}

.status-drop {
    width: 17px;
    height: 16px;
}

.status-page {
    width: 43px;
    height: 16px;
    line-height: 16px;
    margin-left: 8px;
}

.status-drop-page {
    width: 14px;
    height: 16px;
}

.nav {
    width: 14px;
    font-size: 7px;
    color: #666;
    text-align: center;
}

.nav-first {
    margin-left: 6px;
}

.nav-next {
    margin-left: 6px;
}

.status-tool {
    width: 200px;
    text-align: center;
    padding-left: 20px;
    color: #c6c6c6;
}

.arrow-right {
    margin-left: 17px;
    border: 4px solid transparent;
    border-left: 6px solid #bbb;
    border-right: 0;
}

.hscroll {
    flex: 1;
    background: #3a3a3a;
    display: flex;
    align-items: center;
    position: relative;
}

.arrow-left {
    margin-left: 7px;
    border: 5px solid transparent;
    border-right: 6px solid #ddd;
    border-left: 0;
}

.hthumb {
    width: 15px;
    height: 14px;
    margin-left: 334px;
    background: #8f8f8f;
}

.corner-mark {
    position: absolute;
    right: 17px;
    bottom: 3px;
    border: 4px solid transparent;
    border-right-color: #ddd;
    border-bottom-color: #ddd;
}

/* layers panel */
.layers {
    position: absolute;
    right: 0;
    bottom: 17px;
    width: 240px;
    height: 203px;
    background: #474747;
    border-left: 1px solid #333;
    border-top: 1px solid #333;
}

.layers-tabs {
    height: 19px;
    background: #343434;
    display: flex;
    align-items: center;
    font-size: 9.7px;
    font-weight: 600;
    position: relative;
}

.ltab {
    height: 19px;
    line-height: 19px;
    padding: 0 6px;
    color: #7d7d7d;
}

.ltab-on {
    background: #474747;
    color: #d4d4d4;
    width: 42px;
}

.ltab-more {
    position: absolute;
    left: 199px;
    font-size: 7px;
    letter-spacing: -1px;
    color: #ccc;
}

.ltab-menu {
    position: absolute;
    left: 222px;
    width: 14px;
    height: 10px;
}

.layer-list {
    height: 160px;
    margin: 5px 4px 1px 4px;
    border: 1px solid #383838;
    background: #484848;
}

.layer {
    height: 21px;
    display: flex;
    align-items: center;
    border-bottom: 1px solid #3a3a3a;
    font-size: 9.5px;
    color: #cfcfcf;
}

.layer-on {
    background: #5b6070;
}

.l-eye {
    width: 14px;
    height: 10px;
    margin-left: 3px;
    flex: none;
}

.l-lock {
    width: 22px;
    margin-left: 4px;
    height: 21px;
    flex: none;
    border-left: 1px solid #3f3f3f;
    border-right: 1px solid #3f3f3f;
    display: flex;
    align-items: center;
    justify-content: center;
}

.l-lock svg {
    width: 9px;
    height: 11px;
}

.l-bar {
    width: 3px;
    height: 19px;
    flex: none;
    margin-left: 1px;
}

.bar-cyan { background: #4fd8e0; }
.bar-purple { background: #7f3fd0; }
.bar-red { background: #e04848; }
.bar-green { background: #4fd84f; }
.bar-blue { background: #4f4fd8; }
.bar-pink { background: #d84fd8; }
.bar-royal { background: #4f80d8; }

.l-main {
    flex: 1;
    display: flex;
    align-items: center;
    padding-left: 6px;
    min-width: 0;
}

.l-child {
    padding-left: 26px;
}

.tri-down,
.tri-right {
    width: 0;
    height: 0;
    flex: none;
    margin-right: 9px;
    border: 4px solid transparent;
}

.tri-down {
    border-top: 6px solid #d8d8d8;
    border-bottom: 0;
}

.tri-right {
    width: 6px;
    border-left: 6px solid #d8d8d8;
    border-right: 0;
    margin-right: 11px;
}

.thumb {
    width: 17px;
    height: 17px;
    flex: none;
    margin-right: 5px;
    background: #fff;
    border: 1px solid #333;
}

.thumb-grid { background: #a4abcc; }
.thumb-one { background: #a6dcf5; }
.thumb-six { background: #bdbdbd; }

.thumb-four {
    background: repeating-linear-gradient(90deg, #f3b8d4 0 1px, transparent 1px 3px), repeating-linear-gradient(0deg, #f3b8d4 0 1px, #fff 1px 3px);
}

.l-target {
    width: 35px;
    height: 21px;
    flex: none;
    display: flex;
    align-items: center;
    padding-left: 5px;
    border-left: 1px solid #3f3f3f;
}

.l-target svg {
    width: 10px;
    height: 10px;
}

.sel {
    width: 6px;
    height: 6px;
    margin-left: 6px;
    border: 1px solid #111;
}

.sel-cyan { background: #4fd8e0; }
.sel-purple { background: #7f3fd0; }

.layers-foot {
    height: 18px;
    display: flex;
    align-items: center;
    font-size: 10px;
    color: #c8c8c8;
    position: relative;
    padding-left: 5px;
}

.foot-ic {
    position: absolute;
    width: 13px;
    height: 13px;
    top: 3px;
}

.foot-find { left: 97px; }
.foot-clip { left: 122px; }
.foot-sub { left: 149px; }
.foot-new { left: 175px; }
.foot-trash { left: 200px; }

/* right dock */
.dock {
    width: 40px;
    flex: none;
    background: #494949;
    border-left: 1px solid #333;
}

.dockgroup {
    display: flex;
    flex-direction: column;
    align-items: center;
    height: 97px;
    border-bottom: 1px solid #333;
    gap: 9px;
}

.dockgroup:first-of-type {
    height: 96px;
}

.dock-grip {
    width: 24px;
    height: 4px;
    margin-top: 4px;
    margin-bottom: -1px;
    flex: none;
}

.dock-ic {
    width: 20px;
    height: 18px;
    flex: none;
}

.dock-ic-low {
    margin-top: 3px;
}

.dock-on {
    width: 27px;
    height: 23px;
    flex: none;
    background: #333;
    border-radius: 2px;
    display: flex;
    align-items: center;
    justify-content: center;
    margin-top: -4px;
    margin-bottom: -1px;
}

/* windows taskbar */
.taskbar {
    height: 40px;
    flex: none;
    background: #000;
    display: flex;
    align-items: stretch;
}

.task {
    width: 50px;
    flex: none;
    display: flex;
    align-items: center;
    justify-content: center;
    position: relative;
}

.task-narrow {
    width: 49px;
}

.task svg {
    width: 22px;
    height: 22px;
}

.task-small svg {
    width: 17px;
    height: 17px;
}

.task-run::after,
.task-active::after {
    content: "";
    position: absolute;
    bottom: 0;
    height: 2px;
    background: #76b9ed;
}

.task-run::after {
    left: 5px;
    right: 4px;
}

.task-active {
    background: #2b2b2b;
}

.task-active::after {
    left: 1px;
    right: 0;
}

.app-box {
    width: 22px;
    height: 22px;
    font-size: 12px;
    line-height: 18px;
    text-align: center;
    border: 2px solid;
}

.app-dw {
    border-color: #5fc62a;
    color: #5fc62a;
    background: #0c2204;
}

.app-ai {
    border-color: #d9762a;
    color: #e98a33;
    background: #2a1503;
}

.app-office {
    width: 22px;
    height: 20px;
    display: flex;
    align-items: stretch;
}

.app-office b {
    width: 13px;
    color: #fff;
    font-size: 12px;
    line-height: 20px;
    text-align: center;
}

.app-office i {
    flex: 1;
    background: repeating-linear-gradient(0deg, #f4f4f4 0 2px, #555 2px 3px);
}

.app-xl b {
    background: #1d6f42;
}

.app-ppt b {
    background: #c9472a;
}

.tray {
    flex: 1;
    display: flex;
    align-items: center;
    color: #e6e6e6;
}

.tray-chevron {
    width: 14px;
    height: 8px;
    margin-left: 496px;
}

.tray-keys {
    width: 22px;
    height: 14px;
    margin-left: 20px;
}

.clock {
    width: 72px;
    margin-left: 8px;
    display: flex;
    flex-direction: column;
    align-items: center;
    font-size: 11.7px;
    line-height: 18px;
}

.tray-note {
    width: 18px;
    height: 16px;
    margin-left: 33px;
}
```
